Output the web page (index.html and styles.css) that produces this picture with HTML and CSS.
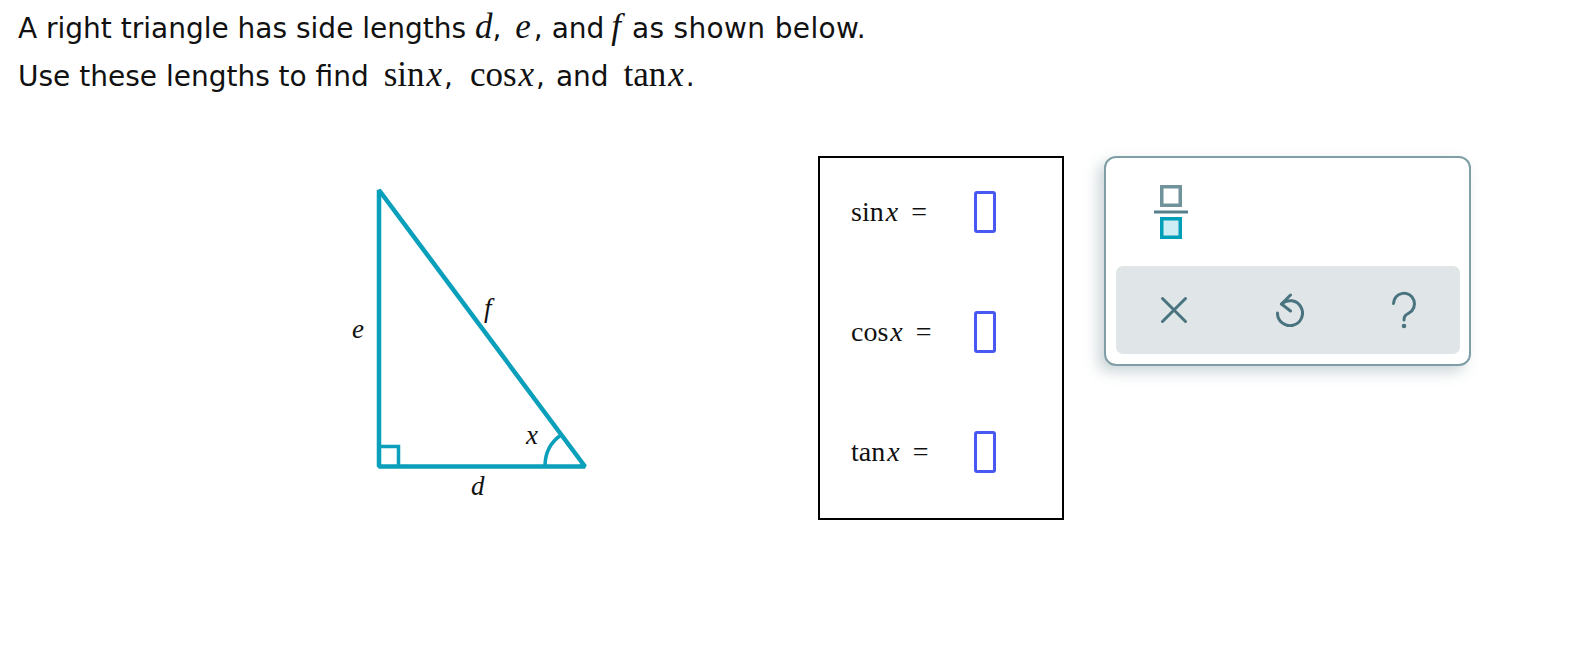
FILE: index.html
```html
<!DOCTYPE html>
<html lang="en">
<head>
    <meta charset="UTF-8">
    <title>Right triangle trigonometry</title>
    <link rel="stylesheet" href="styles.css">
</head>
<body>
    <div class="prompt">
        <p>A right triangle has side lengths <i class="var">d</i>, <i class="var var-e">e</i>, and <i class="var var-f">f</i> <span class="tail">as shown below.</span></p>
        <p>Use these lengths to find <span class="fn">sin<i>x</i></span><span class="comma">,</span> <span class="fn">cos<i>x</i></span><span class="comma">,</span> and <span class="fn">tan<i>x</i></span>.</p>
    </div>

    <div class="work">
        <svg class="figure" width="260" height="345" viewBox="330 170 260 345">
            <g fill="none" stroke="#0a9fba" stroke-width="4.500">
                <path d="M379 466.500 V190 L585 466.500 Z" stroke-linejoin="bevel"/>
                <path d="M379 446.500 H398.500 V466" stroke-width="3.500"/>
                <path d="M545 466 C545 452 551 442 561 435" stroke-width="3.500"/>
            </g>
            <g class="figure-label">
                <text x="352" y="338">e</text>
                <text x="484" y="317">f</text>
                <text x="526" y="444">x</text>
                <text x="471" y="495">d</text>
            </g>
        </svg>

        <div class="answers">
            <div class="answer-row"><span class="answer-label">sin<i>x</i> <span class="eq">=</span></span><span class="answer-input"></span></div>
            <div class="answer-row"><span class="answer-label">cos<i>x</i> <span class="eq">=</span></span><span class="answer-input"></span></div>
            <div class="answer-row"><span class="answer-label">tan<i>x</i> <span class="eq">=</span></span><span class="answer-input"></span></div>
        </div>

        <div class="palette">
            <div class="palette-keys">
                <svg width="34" height="54" viewBox="0 0 34 54">
                    <rect x="7.750" y="1.750" width="18.500" height="18.500" fill="#fff" stroke="#6f929b" stroke-width="3.500"/>
                    <rect x="0" y="25.500" width="34" height="3" fill="#55808c"/>
                    <rect x="7.750" y="33.750" width="18.500" height="18.500" fill="#cdeef5" stroke="#009fb8" stroke-width="3.500"/>
                </svg>
            </div>
            <div class="palette-tools">
                <svg width="28" height="28" viewBox="0 0 28 28" fill="none" stroke="#4a7380" stroke-width="3" stroke-linecap="round">
                    <path d="M2.500 2.500 L25.500 25.500 M25.500 2.500 L2.500 25.500"/>
                </svg>
                <svg width="28" height="34" viewBox="0 0 28 34" fill="none" stroke="#4a7380" stroke-width="3" stroke-linecap="round" stroke-linejoin="round">
                    <path d="M5.500 11 A12.500 12.500 0 1 1 1.500 20"/>
                    <path d="M14.500 2 L5.500 11 L14.500 18"/>
                </svg>
                <svg width="26" height="38" viewBox="0 0 26 38" fill="none" stroke="#4a7380" stroke-width="3" stroke-linecap="round">
                    <path d="M2.500 12.500 A10.500 10.500 0 1 1 18 22 C14.500 24 13 25 13 29"/>
                    <circle cx="13" cy="35" r="2.300" fill="#4a7380" stroke="none"/>
                </svg>
            </div>
        </div>
    </div>
</body>
</html>
```

FILE: styles.css
```css
body {
    margin: 0;
    padding: 0;
    background-color: #fff;
    color: #111;
    font-family: "DejaVu Sans", Verdana, sans-serif;
}

.prompt {
    padding: 5px 0 0 18px;
    font-size: 28px;
    line-height: 48px;
    height: 156px;
    box-sizing: border-box;
}

.prompt p {
    margin: 0;
    white-space: nowrap;
}

.var,
.fn {
    font-family: "Liberation Serif", "Times New Roman", serif;
    font-size: 35px;
    line-height: 0;
}

.var-e {
    margin: 0 3px 0 5px;
}

.var-f {
    margin: 0 2px 0 -2px;
}

.tail {
    letter-spacing: 0.35px;
}

.fn {
    margin: 0 2px 0 6px;
}

.fn i {
    margin-left: 2px;
}

.comma {
    margin-right: 2px;
}

.work {
    display: flex;
    align-items: flex-start;
    padding-left: 330px;
}

.figure {
    display: block;
    margin-top: 14px;
}

.figure-label {
    font-family: "Liberation Serif", "Times New Roman", serif;
    font-style: italic;
    font-size: 27px;
    fill: #111;
}

.answers {
    width: 246px;
    height: 364px;
    box-sizing: border-box;
    margin-left: 228px;
    padding: 33px 0 0 31px;
    border: 2px solid #000;
    display: flex;
    flex-direction: column;
    gap: 78px;
    font-family: "Liberation Serif", "Times New Roman", serif;
    font-size: 28px;
}

.answer-row {
    display: flex;
    align-items: center;
    height: 42px;
}

.answer-label {
    width: 123px;
    white-space: nowrap;
}

.answer-label i {
    margin-left: 2px;
}

.eq {
    margin-left: 6px;
}

.answer-input {
    width: 22px;
    height: 42px;
    box-sizing: border-box;
    border: 3px solid #4858f5;
    border-radius: 3px;
}

.palette {
    width: 367px;
    height: 210px;
    box-sizing: border-box;
    margin-left: 40px;
    padding: 27px 9px 10px 10px;
    background: #fff;
    border: 2px solid #7f9ea6;
    border-radius: 12px;
    box-shadow: -6px 6px 14px rgba(90, 120, 130, 0.3);
    display: flex;
    flex-direction: column;
    justify-content: space-between;
}

.palette-keys {
    height: 56px;
    padding-left: 38px;
}

.palette-tools {
    height: 88px;
    background-color: #e0e6e8;
    border-radius: 7px;
    display: flex;
    align-items: center;
    padding: 0 43px 0 44px;
    justify-content: space-between;
}
```
